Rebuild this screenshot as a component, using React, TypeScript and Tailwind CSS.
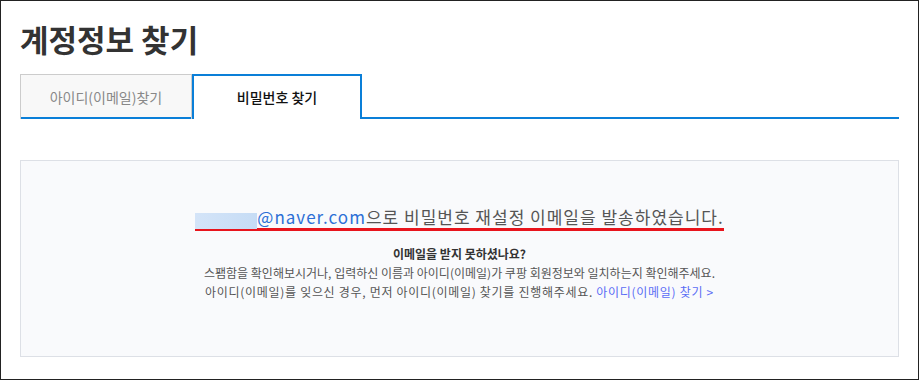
import React from 'react';

const font = { fontFamily: '"Noto Sans CJK KR", "Noto Sans", sans-serif' };

export default function App() {
  return (
    <div
      className="w-[919px] h-[380px] border border-[#222] bg-white px-[19px] overflow-hidden"
      style={font}
    >
      {/* Title */}
      <h1 className="pt-[20px] text-[31px] font-bold leading-[36px] text-[#333]">
        계정정보 찾기
      </h1>

      {/* Tabs */}
      <div className="mt-[17px] flex h-[45px]">
        <div className="w-[172px] flex items-center justify-center bg-[#f8f8f8] border border-[#ccc] border-b-0 shadow-[inset_0_-2px_0_#0a7fd8] text-[14px] text-[#888]">
          아이디(이메일)찾기
        </div>
        <div className="w-[170px] flex items-center justify-center bg-white border-2 border-b-0 border-[#0a7fd8] text-[14px] font-medium text-[#111]">
          비밀번호 찾기
        </div>
        <div className="flex-1 border-b-2 border-[#0a7fd8]" />
      </div>

      {/* Result box */}
      <div className="mt-[41px] h-[197px] border border-[#dde0e6] bg-[#f9fafc] flex flex-col items-center pt-[45px]">
        <div className="flex items-end border-b-[3px] border-[#e8141c] text-[17px] leading-[22px] tracking-[1px] text-[#555]">
          <span className="inline-block w-[62px] h-[16px] mb-[-1px] bg-gradient-to-r from-[#d4e4f8] to-[#c6dcf5]" />
          <span className="text-[#2c6fd6]">@naver.com</span>
          <span>으로 비밀번호 재설정 이메일을 발송하였습니다.</span>
        </div>

        <p className="mt-[14px] text-[12px] font-bold leading-[18px] text-[#333]">
          이메일을 받지 못하셨나요?
        </p>
        <p className="text-[12px] leading-[19px] text-[#555]">
          스팸함을 확인해보시거나, 입력하신 이름과 아이디(이메일)가 쿠팡 회원정보와 일치하는지 확인해주세요.
        </p>
        <p className="text-[12px] leading-[19px] tracking-[0.7px] text-[#555]">
          아이디(이메일)를 잊으신 경우, 먼저 아이디(이메일) 찾기를 진행해주세요.{' '}
          <a className="text-[#5a6cf5]">아이디(이메일) 찾기 &gt;</a>
        </p>
      </div>
    </div>
  );
}
